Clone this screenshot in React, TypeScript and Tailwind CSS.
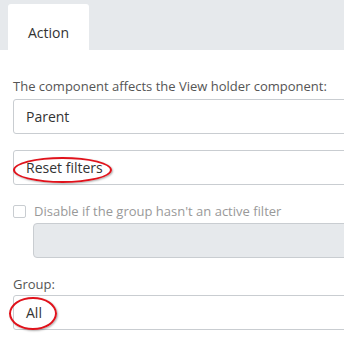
const font = { fontFamily: '"Open Sans", "Noto Sans", sans-serif' };

const Field = ({ value, ring }: { value: string; ring?: string }) => (
  <div className="relative">
    <div className="flex h-[35px] w-[360px] items-center rounded-l-[3px] border border-[#c9cdd1] bg-white pl-[12px] text-[14px] text-[#333]">
      {value}
    </div>
    {ring && <div className={`pointer-events-none absolute rounded-[50%] border-2 border-[#e0121b] shadow-[1px_1px_2px_rgba(0,0,0,0.3)] ${ring}`} />}
  </div>
);

export default function App() {
  return (
    <div className="h-[347px] w-[344px] overflow-hidden bg-white" style={font}>
      <div className="flex h-[50px] items-end bg-[#e6e9ec] pl-[8px]">
        <div className="flex h-[46px] w-[81px] justify-center rounded-t-[3px] bg-white pt-[19px] text-[14px] leading-[20px] text-[#333]">
          Action
        </div>
      </div>

      <div className="pl-[13px] pt-[27px]">
        <div className="mb-[4px] text-[13px] leading-[18px] text-[#555]">
          The component affects the View holder component:
        </div>
        <Field value="Parent" />

        <div className="mt-[16px]">
          <Field value="Reset filters" ring="left-[0px] top-[7px] h-[26px] w-[99px]" />
        </div>

        <div className="mt-[17px] flex items-center gap-[8px]">
          <div className="h-[13px] w-[13px] rounded-[2px] border border-[#c9cdd1] bg-white" />
          <span className="text-[13px] leading-[18px] text-[#999]">Disable if the group hasn't an active filter</span>
        </div>
        <div className="ml-[20px] mt-[3px] h-[35px] w-[340px] rounded-l-[4px] border border-[#c9cdd1] bg-[#e6e9ec]" />

        <div className="mb-[2px] mt-[17px] text-[13px] leading-[18px] text-[#555]">Group:</div>
        <Field value="All" ring="-left-[4px] top-[2px] h-[33px] w-[48px]" />
      </div>
    </div>
  );
}
